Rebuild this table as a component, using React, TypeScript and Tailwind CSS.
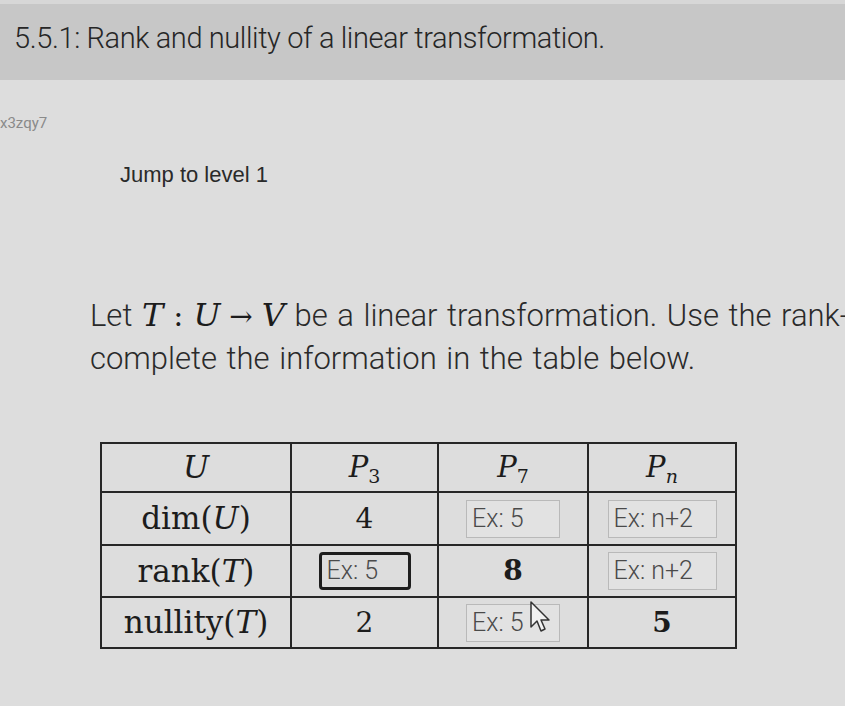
import React from "react";

const serif = { fontFamily: '"DejaVu Serif", "Liberation Serif", serif' };
const roboto = { fontFamily: "Roboto, sans-serif" };

function MathP({ sub, italicSub = false }: { sub: string; italicSub?: boolean }) {
  return (
    <span className="inline-flex items-baseline text-[#1c1c1c]" style={serif}>
      <span className="text-[29px] italic">P</span>
      <span className={`text-[19px] relative top-[6px] ${italicSub ? "italic" : ""}`}>{sub}</span>
    </span>
  );
}

function ExBox({
  text,
  focused = false,
  w = "w-[94px]",
  children,
}: {
  text: string;
  focused?: boolean;
  w?: string;
  children?: React.ReactNode;
}) {
  return (
    <div
      className={`${w} h-[38px] mx-auto relative flex items-center pl-[5px] text-[25px] font-light text-[#4a4a4a] ${
        focused
          ? "border-[3px] border-[#1e1e1e] rounded-[4px]"
          : "border border-[#b9b9b9] bg-[#e2e2e2]"
      }`}
      style={roboto}
    >
      {text}
      {children}
    </div>
  );
}

// mouse pointer sitting over the last input
function Cursor() {
  return (
    <svg className="absolute left-[62px] top-[-5px]" width="26" height="36" viewBox="0 0 26 36">
      <path
        d="M2 2 L2 27 L8 21 L12 31 L16 29 L12 20 L20 20 Z"
        fill="#f2f2f2"
        stroke="#333"
        strokeWidth="1.5"
        strokeLinejoin="round"
      />
    </svg>
  );
}

export default function App() {
  const cell = "border-2 border-[#262626] text-center align-middle p-0";
  const label = "text-[31px] text-[#1c1c1c]";
  const num = "text-[28px] text-[#1c1c1c]";

  return (
    <div className="w-[845px] h-[706px] overflow-hidden bg-[#dddddd] flex flex-col">
      <div className="h-[4px] bg-[#d7d7d7] shrink-0" />
      <div className="h-[76px] bg-[#c7c7c7] shrink-0 flex items-start pl-[14px] pt-[20px]">
        <h1
          className="text-[29px] font-light text-[#262626] leading-none tracking-[-0.4px]"
          style={roboto}
        >
          5.5.1: Rank and nullity of a linear transformation.
        </h1>
      </div>

      <div className="pt-[36px] pl-0 text-[15px] text-[#8a8a8a] leading-none" style={roboto}>
        x3zqy7
      </div>

      <div
        className="pl-[120px] pt-[33px] text-[22px] text-[#2a2a2a] leading-none"
        style={{ fontFamily: '"Liberation Sans", Arial, sans-serif' }}
      >
        Jump to level 1
      </div>

      <div
        className="pl-[90px] pt-[108px] text-[31px] font-light text-[#2a2a2a] leading-[42px] whitespace-nowrap [word-spacing:2px]"
        style={roboto}
      >
        <div>
          Let{" "}
          <span className="italic text-[32px] text-[#1c1c1c]" style={serif}>
            T
          </span>
          <span className="text-[30px] text-[#1c1c1c] mx-[10px]" style={serif}>
            :
          </span>
          <span className="italic text-[32px] text-[#1c1c1c]" style={serif}>
            U
          </span>
          <span className="text-[28px] text-[#1c1c1c] mx-[9px]" style={serif}>
            →
          </span>
          <span className="italic text-[32px] text-[#1c1c1c]" style={serif}>
            V
          </span>{" "}
          be a linear transformation. Use the rank-nullity theorem to
        </div>
        <div>complete the information in the table below.</div>
      </div>

      <div className="pl-[100px] pt-[62px]">
        <table className="border-collapse border-2 border-[#262626]" style={serif}>
          <colgroup>
            <col className="w-[190px]" />
            <col className="w-[147px]" />
            <col className="w-[150px]" />
            <col className="w-[148px]" />
          </colgroup>
          <tbody>
            <tr className="h-[49px]">
              <td className={cell}>
                <span className="italic text-[31px] text-[#1c1c1c]">U</span>
              </td>
              <td className={cell}>
                <MathP sub="3" />
              </td>
              <td className={cell}>
                <MathP sub="7" />
              </td>
              <td className={cell}>
                <MathP sub="n" italicSub />
              </td>
            </tr>
            <tr className="h-[53px]">
              <td className={cell}>
                <span className={label}>
                  dim(<span className="italic">U</span>)
                </span>
              </td>
              <td className={cell}>
                <span className={num}>4</span>
              </td>
              <td className={cell}>
                <ExBox text="Ex: 5" />
              </td>
              <td className={cell}>
                <ExBox text="Ex: n+2" w="w-[109px]" />
              </td>
            </tr>
            <tr className="h-[52px]">
              <td className={cell}>
                <span className={label}>
                  rank(<span className="italic">T</span>)
                </span>
              </td>
              <td className={cell}>
                <ExBox text="Ex: 5" focused w="w-[92px]" />
              </td>
              <td className={cell}>
                <span className={`${num} font-bold`}>8</span>
              </td>
              <td className={cell}>
                <ExBox text="Ex: n+2" w="w-[109px]" />
              </td>
            </tr>
            <tr className="h-[51px]">
              <td className={cell}>
                <span className={label}>
                  nullity(<span className="italic">T</span>)
                </span>
              </td>
              <td className={cell}>
                <span className={num}>2</span>
              </td>
              <td className={cell}>
                <ExBox text="Ex: 5">
                  <Cursor />
                </ExBox>
              </td>
              <td className={cell}>
                <span className={`${num} font-bold`}>5</span>
              </td>
            </tr>
          </tbody>
        </table>
      </div>
    </div>
  );
}
